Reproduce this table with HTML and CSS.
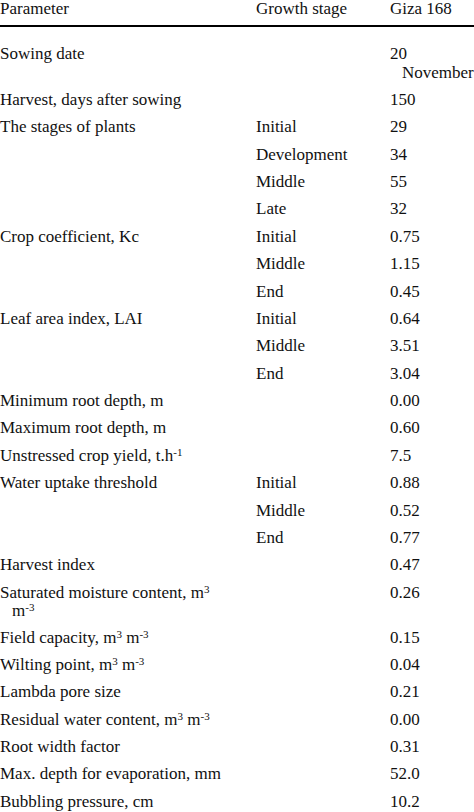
FILE: index.html
```html
<!DOCTYPE html>
<html>
<head>
<meta charset="utf-8">
<link rel="stylesheet" href="styles.css">
</head>
<body>
<table class="params">
  <colgroup><col class="c1"><col class="c2"><col class="c3"></colgroup>
  <thead>
    <tr><th>Parameter</th><th>Growth stage</th><th>Giza 168</th></tr>
  </thead>
  <tbody>
    <tr class="first"><td>Sowing date</td><td></td><td>20<br>November</td></tr>
    <tr><td>Harvest, days after sowing</td><td></td><td>150</td></tr>
    <tr><td>The stages of plants</td><td>Initial</td><td>29</td></tr>
    <tr><td></td><td>Development</td><td>34</td></tr>
    <tr><td></td><td>Middle</td><td>55</td></tr>
    <tr><td></td><td>Late</td><td>32</td></tr>
    <tr><td>Crop coefficient, Kc</td><td>Initial</td><td>0.75</td></tr>
    <tr><td></td><td>Middle</td><td>1.15</td></tr>
    <tr><td></td><td>End</td><td>0.45</td></tr>
    <tr><td>Leaf area index, LAI</td><td>Initial</td><td>0.64</td></tr>
    <tr><td></td><td>Middle</td><td>3.51</td></tr>
    <tr><td></td><td>End</td><td>3.04</td></tr>
    <tr><td>Minimum root depth, m</td><td></td><td>0.00</td></tr>
    <tr><td>Maximum root depth, m</td><td></td><td>0.60</td></tr>
    <tr><td>Unstressed crop yield, t.h<sup>-1</sup></td><td></td><td>7.5</td></tr>
    <tr><td>Water uptake threshold</td><td>Initial</td><td>0.88</td></tr>
    <tr><td></td><td>Middle</td><td>0.52</td></tr>
    <tr><td></td><td>End</td><td>0.77</td></tr>
    <tr><td>Harvest index</td><td></td><td>0.47</td></tr>
    <tr class="tight"><td>Saturated moisture content, m<sup>3</sup><br>m<sup>-3</sup></td><td></td><td>0.26</td></tr>
    <tr><td>Field capacity, m<sup>3</sup> m<sup>-3</sup></td><td></td><td>0.15</td></tr>
    <tr><td>Wilting point, m<sup>3</sup> m<sup>-3</sup></td><td></td><td>0.04</td></tr>
    <tr><td>Lambda pore size</td><td></td><td>0.21</td></tr>
    <tr><td>Residual water content, m<sup>3</sup> m<sup>-3</sup></td><td></td><td>0.00</td></tr>
    <tr><td>Root width factor</td><td></td><td>0.31</td></tr>
    <tr><td>Max. depth for evaporation, mm</td><td></td><td>52.0</td></tr>
    <tr><td>Bubbling pressure, cm</td><td></td><td>10.2</td></tr>
  </tbody>
</table>
</body>
</html>
```
FILE: styles.css
```css
html, body {
  margin: 0;
  padding: 0;
  background: #fff;
  overflow: hidden;
}
body {
  width: 474px;
  font-family: "Liberation Serif", "Times New Roman", serif;
  font-size: 17px;
  color: #111;
}
.params {
  border-collapse: collapse;
  table-layout: fixed;
  width: 474px;
}
.params col.c1 { width: 256px; }
.params col.c2 { width: 134px; }
.params col.c3 { width: 84px; }
.params th,
.params td {
  font-weight: normal;
  text-align: left;
  vertical-align: top;
  white-space: nowrap;
  line-height: 18.5px;
  padding: 4.45px 0 4.45px 12px;
  text-indent: -12px;
}
.params th {
  padding-top: 0;
  padding-bottom: 6.5px;
  border-bottom: 2px solid #000;
}
.params tr.first td {
  padding-top: 18px;
}
.params tr.tight td {
  padding-bottom: 3.45px;
}
.params sup {
  font-size: 11px;
  line-height: 0;
  vertical-align: 5px;
}
```
